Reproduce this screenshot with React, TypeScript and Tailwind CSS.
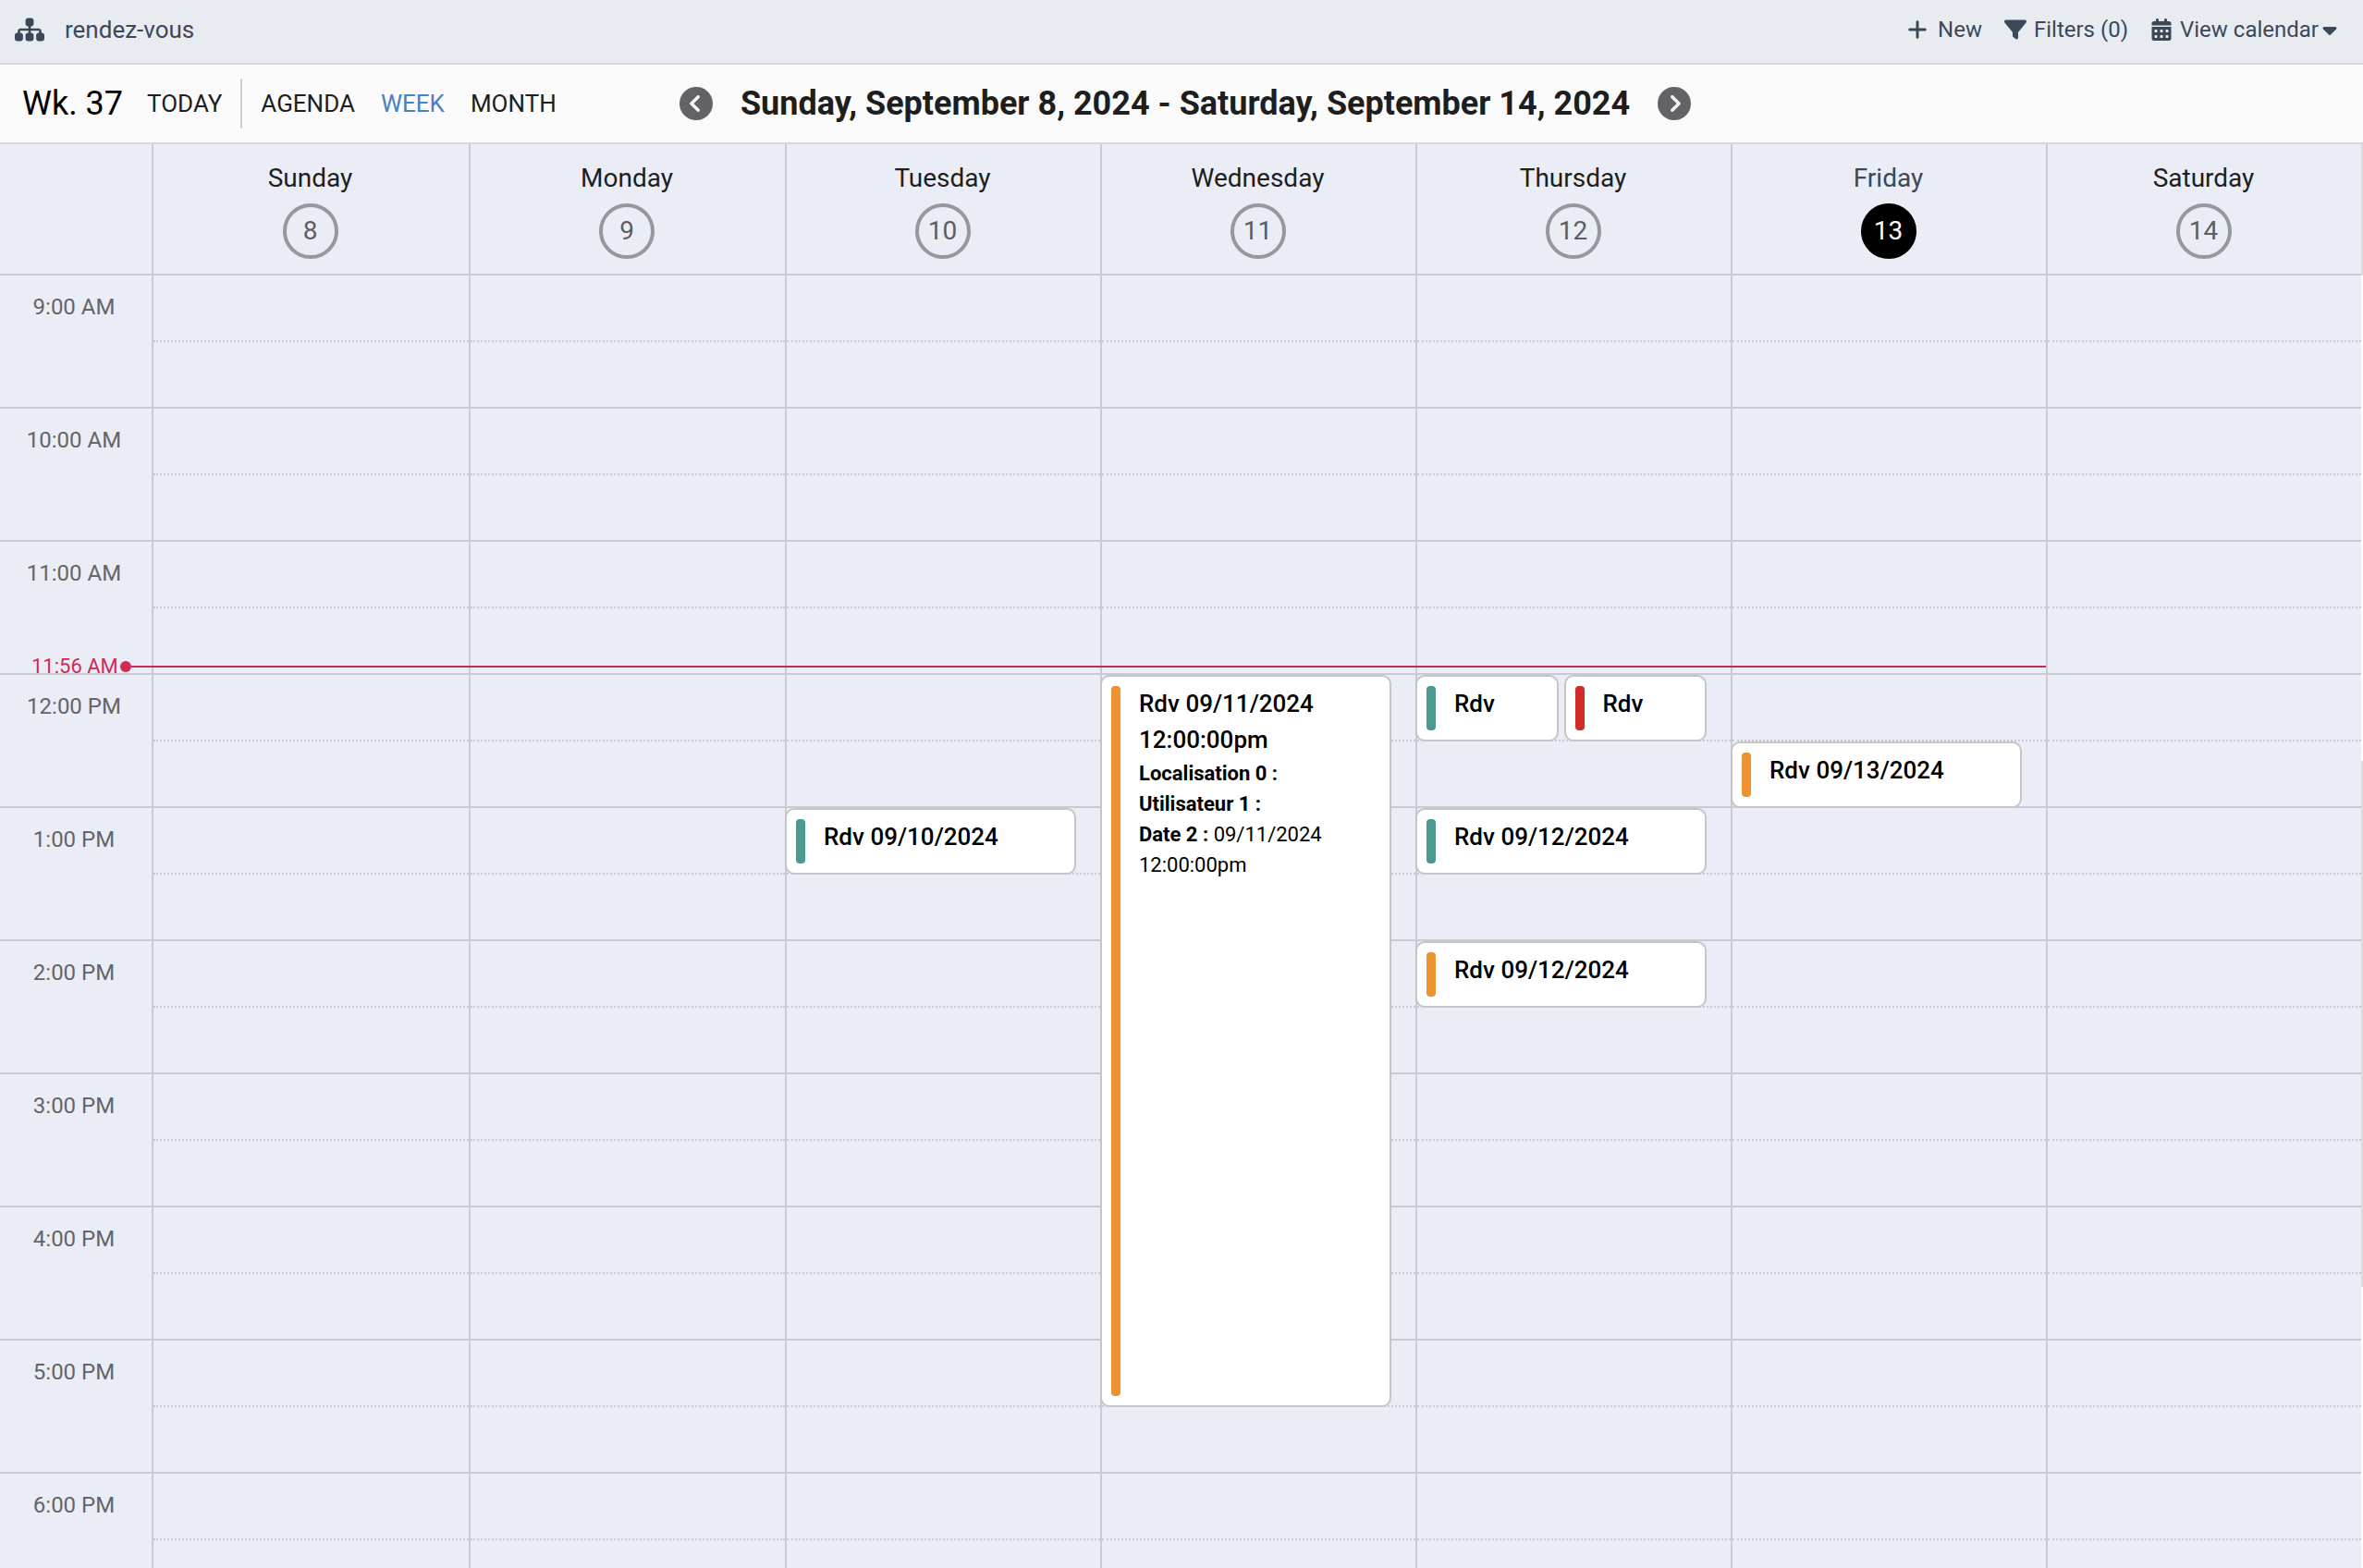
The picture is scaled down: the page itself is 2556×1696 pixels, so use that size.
import React, { useState } from 'react';
import clsx from 'clsx';
import {
  FaCalendarDays,
  FaCaretDown,
  FaCircleChevronLeft,
  FaCircleChevronRight,
  FaFilter,
  FaPlus,
  FaSitemap,
} from 'react-icons/fa6';

type CalendarEvent = {
  day: number;
  start: number; // hours
  end: number;
  title: string;
  color: string;
  slot?: 'left' | 'right';
  details?: { label?: string; value?: string }[];
};

const HOUR_HEIGHT = 144;
const FIRST_HOUR = 9;

const days = [
  { name: 'Sunday', date: 8 },
  { name: 'Monday', date: 9 },
  { name: 'Tuesday', date: 10 },
  { name: 'Wednesday', date: 11 },
  { name: 'Thursday', date: 12 },
  { name: 'Friday', date: 13, today: true },
  { name: 'Saturday', date: 14 },
];

const hours = [
  '9:00 AM',
  '10:00 AM',
  '11:00 AM',
  '12:00 PM',
  '1:00 PM',
  '2:00 PM',
  '3:00 PM',
  '4:00 PM',
  '5:00 PM',
  '6:00 PM',
];

const events: CalendarEvent[] = [
  { day: 10, start: 13, end: 13.5, title: 'Rdv 09/10/2024', color: 'bg-[#4a9b8f]' },
  {
    day: 11,
    start: 12,
    end: 17.5,
    title: 'Rdv 09/11/2024 12:00:00pm',
    color: 'bg-[#ed9332]',
    details: [
      { label: 'Localisation 0 :' },
      { label: 'Utilisateur 1 :' },
      { label: 'Date 2 :', value: '09/11/2024 12:00:00pm' },
    ],
  },
  { day: 12, start: 12, end: 12.5, title: 'Rdv', color: 'bg-[#4a9b8f]', slot: 'left' },
  { day: 12, start: 12, end: 12.5, title: 'Rdv', color: 'bg-[#d02c28]', slot: 'right' },
  { day: 12, start: 13, end: 13.5, title: 'Rdv 09/12/2024', color: 'bg-[#4a9b8f]' },
  { day: 12, start: 14, end: 14.5, title: 'Rdv 09/12/2024', color: 'bg-[#ed9332]' },
  { day: 13, start: 12.5, end: 13, title: 'Rdv 09/13/2024', color: 'bg-[#ed9332]' },
];

const views = ['Agenda', 'Week', 'Month'];

// shared by the day headers, the hour grid and the current time line
const columns = 'grid grid-cols-[164px_343fr_342fr_341fr_341fr_341fr_341fr_341fr]';

function EventCard({ event }: { event: CalendarEvent }) {
  return (
    <article
      className={clsx(
        'absolute flex gap-5 overflow-hidden rounded-[10px] border-2 border-[#c5c5c7] bg-white p-[10px] text-black',
        event.slot === 'left' && 'left-0 w-[calc(50%-3px)]',
        event.slot === 'right' && 'right-0 w-[calc(50%-3px)]',
        !event.slot && 'inset-x-0'
      )}
      style={{
        top: (event.start - FIRST_HOUR) * HOUR_HEIGHT,
        height: (event.end - event.start) * HOUR_HEIGHT,
      }}
    >
      <span className={clsx('w-[10px] shrink-0 rounded-[4px]', event.color)} />
      <div className={clsx('min-w-0', event.details && 'pr-12')}>
        <h3 className="text-[26px] leading-[39px] font-medium">{event.title}</h3>
        {event.details?.map((detail) => (
          <p key={detail.label} className="text-[22px] leading-[33px]">
            <b className="font-bold">{detail.label}</b> {detail.value}
          </p>
        ))}
      </div>
    </article>
  );
}

export default function App() {
  const [view, setView] = useState('Week');

  return (
    <div className="flex h-screen flex-col overflow-hidden bg-[#eaedf5] font-[Roboto,sans-serif]">
      {/* Top bar */}
      <header className="flex h-[70px] shrink-0 items-center justify-between border-b-2 border-[#d6d8dc] bg-[#e8ecf1] pr-7 pb-1 pl-4 text-[#3c4858]">
        <div className="flex items-center gap-[22px]">
          <FaSitemap className="h-8 w-8" />
          <h1 className="text-[26px] leading-[39px]">rendez-vous</h1>
        </div>
        <div className="flex items-center gap-6 text-[24px] leading-9">
          <button className="flex items-center gap-[10px]">
            <FaPlus className="h-6 w-6" />
            New
          </button>
          <button className="flex items-center gap-2">
            <FaFilter className="h-6 w-6" />
            Filters (0)
          </button>
          <button className="flex items-center gap-2">
            <FaCalendarDays className="h-6 w-6" />
            <span className="flex items-center gap-1">
              View calendar
              <FaCaretDown className="h-6 w-4" />
            </span>
          </button>
        </div>
      </header>

      {/* Toolbar */}
      <div className="flex h-[86px] shrink-0 items-center border-b-2 border-[#d8d8da] bg-[#fafafa] pr-4 pl-6 text-[#1e1e1e]">
        <div className="flex flex-1 items-center text-[26px]">
          <span className="text-[36px] text-black">Wk. 37</span>
          <button className="pr-5 pl-[26px] uppercase">Today</button>
          <span className="h-[54px] w-0.5 bg-[#d0d0d2]" />
          <nav className="flex gap-7 pl-5">
            {views.map((name) => (
              <button
                key={name}
                onClick={() => setView(name)}
                className={clsx('uppercase', view === name && 'text-[#4a80c4]')}
              >
                {name}
              </button>
            ))}
          </nav>
        </div>
        <div className="flex items-center gap-[30px] text-[#626367]">
          <button aria-label="Previous week">
            <FaCircleChevronLeft className="h-9 w-9" />
          </button>
          <h2 className="text-[36px] font-bold whitespace-nowrap text-[#1e1e1e]">
            Sunday, September 8, 2024 - Saturday, September 14, 2024
          </h2>
          <button aria-label="Next week">
            <FaCircleChevronRight className="h-9 w-9" />
          </button>
        </div>
        <div className="flex-1" />
      </div>

      {/* Day headers */}
      <div className="flex h-[142px] shrink-0">
        <div className={clsx(columns, 'flex-1 border-b-2 border-[#cac9d4]')}>
          <div />
          {days.map((day) => (
            <div
              key={day.date}
              className="flex flex-col items-center gap-[6px] border-l-2 border-[#cac9d4] pt-4 pr-0.5 text-[28px] leading-[42px]"
            >
              <span className={day.today ? 'text-[#3c4858]' : 'text-[#1e1e1e]'}>{day.name}</span>
              <span
                className={clsx(
                  'flex h-[60px] w-[60px] items-center justify-center rounded-full border-4',
                  day.today ? 'border-black bg-black text-white' : 'border-[#97989d] text-[#5c5d60]'
                )}
              >
                {day.date}
              </span>
            </div>
          ))}
        </div>
        <div className="w-0.5 bg-[#dadadd]" />
      </div>

      {/* Hour grid */}
      <div className="flex min-h-0 flex-1 overflow-hidden">
        <div className={clsx(columns, 'relative flex-1')}>
          <div>
            {hours.map((hour) => (
              <div
                key={hour}
                className="h-36 border-b-2 border-[#cac9d4] pt-4 pr-1 text-center text-[24px] leading-9 text-[#646568]"
              >
                {hour}
              </div>
            ))}
          </div>
          {days.map((day) => (
            <div key={day.date} className="relative border-l-2 border-[#cac9d4]">
              {hours.map((hour) => (
                <div key={hour} className="h-36 border-b-2 border-[#cac9d4]">
                  <div className="h-[72px] border-b-2 border-dotted border-[#cac9d4]" />
                </div>
              ))}
              <div className="absolute inset-y-0 right-[26px] -left-0.5">
                {events
                  .filter((event) => event.day === day.date)
                  .map((event, i) => (
                    <EventCard key={i} event={event} />
                  ))}
              </div>
            </div>
          ))}

          {/* Current time */}
          <div className={clsx(columns, 'absolute inset-x-0 top-[405px] h-9 items-center')}>
            <div className="flex items-center pl-[34px] text-[22px] leading-9 text-[#cf2b55]">
              <span className="flex-1 whitespace-nowrap">11:56 AM</span>
              <span className="h-3 w-3 rounded-full bg-[#cf2b55]" />
              <span className="h-0.5 w-[22px] bg-[#cf2b55]" />
            </div>
            <div className="col-span-6 h-0.5 bg-[#c22c52]" />
          </div>
        </div>
        <div className="w-0.5 bg-white pt-[525px]">
          <div className="h-[569px] bg-[#dadadd]" />
        </div>
      </div>
    </div>
  );
}
